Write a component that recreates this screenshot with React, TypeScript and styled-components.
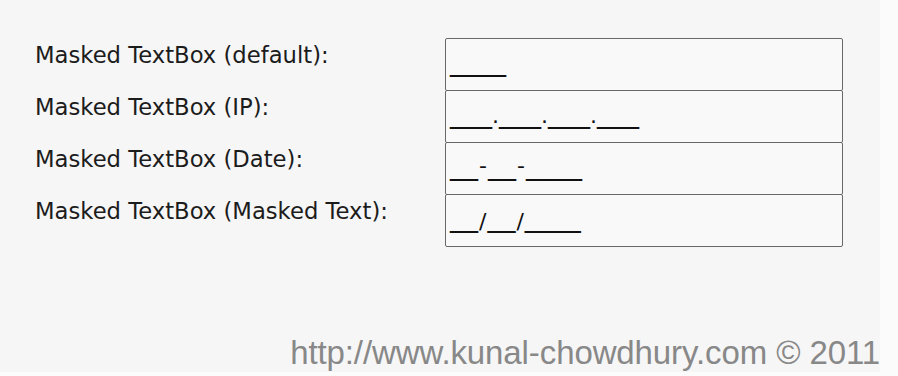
import React from "react";
import styled, { createGlobalStyle } from "styled-components";

const GlobalStyle = createGlobalStyle`
  html, body {
    margin: 0;
    padding: 0;
    background: #fbfbfb;
  }
`;

const Page = styled.div`
  width: 898px;
  height: 376px;
  background: #fbfbfb;
`;

const Panel = styled.div`
  width: 880px;
  height: 372px;
  background: #f6f6f6;
  display: flex;
  flex-direction: column;
  box-sizing: border-box;
  padding-top: 38px;
`;

const Form = styled.div`
  display: grid;
  grid-template-columns: 410px 398px;
  grid-auto-rows: 52px;
  padding-left: 35px;
`;

const Label = styled.div`
  font-family: "DejaVu Sans", Verdana, sans-serif;
  font-size: 22.7px;
  line-height: 26px;
  padding-top: 4px;
  color: #1c1c1c;
  white-space: nowrap;
`;

const Box = styled.div`
  height: 53px;
  box-sizing: border-box;
  border: 1px solid #686868;
  border-radius: 2px;
  background: #f9f9f9;
  padding: 0 4px 13px;
  display: flex;
  align-items: flex-end;
`;

const Mask = styled.div`
  font-family: "DejaVu Sans", Verdana, sans-serif;
  font-size: 22px;
  line-height: 22px;
  color: #111;
  white-space: pre;
`;

const Blank = styled.span`
  font-size: 28px;
  vertical-align: 3px;
`;

const Sep = styled.span<{ $lift: number; $pad: number }>`
  vertical-align: ${(p) => p.$lift}px;
  padding: 0 ${(p) => p.$pad}px;
`;

const Footer = styled.div`
  margin-top: auto;
  align-self: flex-end;
  font-family: "Liberation Sans", Arial, sans-serif;
  font-size: 33px;
  letter-spacing: -0.1px;
  color: #888;
  line-height: 38px;
`;

const sepStyle: Record<string, { lift: number; pad: number }> = {
  ".": { lift: 2, pad: 0 },
  "-": { lift: 4, pad: 1 },
  "/": { lift: 0, pad: 1 },
};

const fields = [
  { label: "Masked TextBox (default):", mask: "____" },
  { label: "Masked TextBox (IP):", mask: "___.___.___.___" },
  { label: "Masked TextBox (Date):", mask: "__-__-____" },
  { label: "Masked TextBox (Masked Text):", mask: "__/__/____" },
];

const MaskText = ({ value }: { value: string }) => {
  const runs = value.match(/_+|[^_]+/g) ?? [];
  return (
    <Mask>
      {runs.map((run, i) => {
        if (run.startsWith("_")) return <Blank key={i}>{run}</Blank>;
        const s = sepStyle[run] ?? { lift: 0, pad: 0 };
        return (
          <Sep key={i} $lift={s.lift} $pad={s.pad}>
            {run}
          </Sep>
        );
      })}
    </Mask>
  );
};

export default function App() {
  return (
    <Page>
      <GlobalStyle />
      <Panel>
        <Form>
          {fields.map((f) => (
            <React.Fragment key={f.label}>
              <Label>{f.label}</Label>
              <Box>
                <MaskText value={f.mask} />
              </Box>
            </React.Fragment>
          ))}
        </Form>
        <Footer>http://www.kunal-chowdhury.com © 2011</Footer>
      </Panel>
    </Page>
  );
}
